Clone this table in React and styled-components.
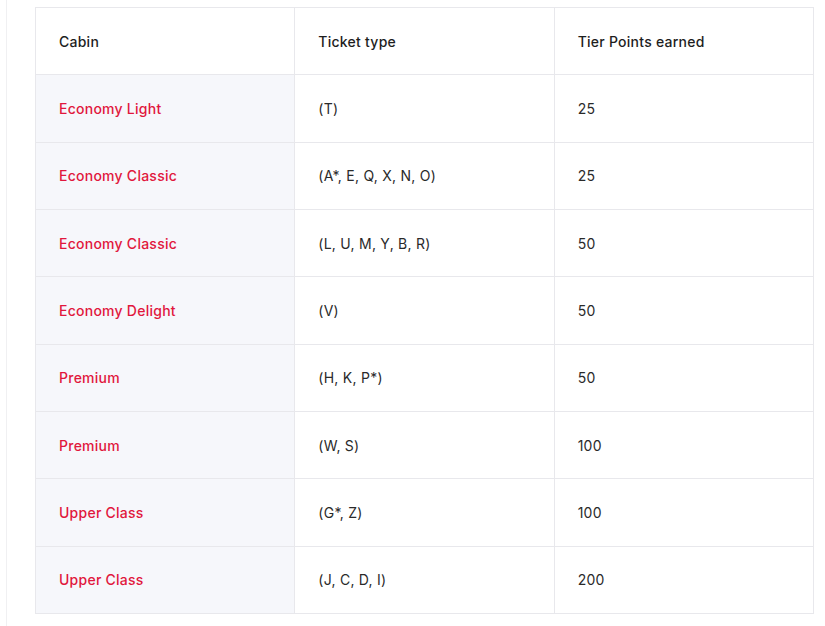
import React from "react";
import styled, { createGlobalStyle } from "styled-components";

const Global = createGlobalStyle`
  html, body { margin: 0; padding: 0; background: #ffffff; }
  body { font-family: Inter, "Noto Sans", sans-serif; }
`;

const Page = styled.div`
  margin-left: 6px;
  border-left: 1px solid #f0f0f2;
  padding: 7px 0 0 28px;
  min-height: 626px;
  box-sizing: border-box;
`;

const Table = styled.table`
  width: 779px;
  border-collapse: collapse;
  table-layout: fixed;
  border: 1px solid #e8e8ec;
`;

const Cell = styled.td`
  height: 67.33px;
  box-sizing: border-box;
  padding: 1px 23px 0;
  border: 1px solid #e8e8ec;
  font-size: 14px;
  line-height: 20px;
  vertical-align: middle;
  text-align: left;
  letter-spacing: 0.25px;
  color: ${(p) => (p.$accent ? "#e1173d" : p.$head ? "#1e1e1e" : "#2a2a2a")};
  font-weight: ${(p) => (p.$accent || p.$head ? 500 : 400)};
  background: ${(p) => (p.$shade ? "#f6f7fb" : "#ffffff")};
`;

const HeadCell = styled(Cell).attrs({ as: "th" })``;

const rows = [
  ["Economy Light", "(T)", "25"],
  ["Economy Classic", "(A*, E, Q, X, N, O)", "25"],
  ["Economy Classic", "(L, U, M, Y, B, R)", "50"],
  ["Economy Delight", "(V)", "50"],
  ["Premium", "(H, K, P*)", "50"],
  ["Premium", "(W, S)", "100"],
  ["Upper Class", "(G*, Z)", "100"],
  ["Upper Class", "(J, C, D, I)", "200"],
];

export default function App() {
  return (
    <>
      <Global />
      <Page>
        <Table>
          <thead>
            <tr>
              <HeadCell $head>Cabin</HeadCell>
              <HeadCell $head>Ticket type</HeadCell>
              <HeadCell $head>Tier Points earned</HeadCell>
            </tr>
          </thead>
          <tbody>
            {rows.map((r, i) => (
              <tr key={i}>
                <Cell $accent $shade>{r[0]}</Cell>
                <Cell>{r[1]}</Cell>
                <Cell>{r[2]}</Cell>
              </tr>
            ))}
          </tbody>
        </Table>
      </Page>
    </>
  );
}
